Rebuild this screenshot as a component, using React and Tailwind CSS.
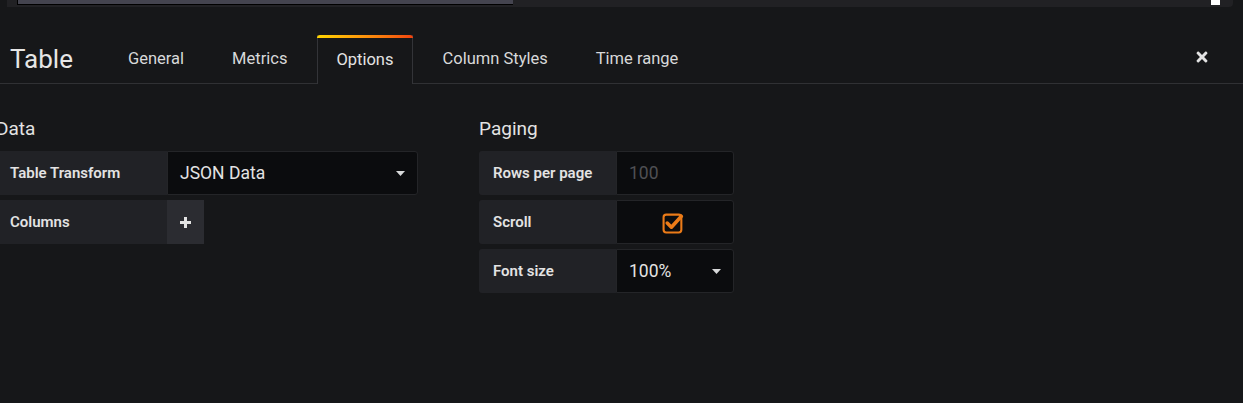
import React from "react";
import { FaTimes } from "react-icons/fa";

const tabs = ["General", "Metrics", "Options", "Column Styles", "Time range"];

const Caret = () => (
  <svg width="9" height="5" viewBox="0 0 9 5" className="shrink-0">
    <path d="M0 0h9L4.5 5z" fill="#d8d9da" />
  </svg>
);

const CheckIcon = () => (
  <svg width="23" height="23" viewBox="0 0 22 22">
    <rect x="1.5" y="3.5" width="17" height="17" rx="2.5" fill="none" stroke="#eb7b18" strokeWidth="2" />
    <path d="M5 11.5l4 4 9.5-10.5" fill="none" stroke="#eb7b18" strokeWidth="3.4" strokeLinecap="round" strokeLinejoin="round" />
  </svg>
);

const Label = ({ children, width }) => (
  <div className={`${width} h-full flex items-center pl-[14px] bg-[#212226] rounded-l-[3px] text-[15px] font-semibold text-[#e3e3e3] shrink-0`}>
    {children}
  </div>
);

const App = () => {
  return (
    <div className="w-[1243px] h-[403px] bg-[#161719] overflow-hidden text-[#d8d9da]" style={{ fontFamily: "Roboto, 'Liberation Sans', sans-serif" }}>
      {/* bottom edge of the panel above */}
      <div className="ml-[7px] w-[1226px] h-[7px] bg-[#212124] rounded-br-[4px] flex">
        <div className="ml-[10px] w-[496px] h-[5px] bg-[#44444f] border-l border-b border-black"></div>
        <div className="ml-auto mr-[13px] w-[9px] h-[5px] bg-white"></div>
      </div>

      {/* tab bar */}
      <div className="mt-[28px] h-[49px] border-b border-[#303134] flex items-stretch">
        <div className="pl-[10px] w-[110px] flex items-center text-[26px] text-[#e6e6e6] leading-none">Table</div>
        <div className="flex gap-[12px]">
          {tabs.map((t) =>
            t === "Options" ? (
              <div key={t} className="relative px-[18px] flex items-center text-[16.5px] text-[#e3e3e3] bg-[#161719] border-x border-[#333438] -mb-px">
                <div className="absolute left-[-1px] right-[-1px] top-0 h-[3px] rounded-t-[3px] bg-gradient-to-r from-[#ffd500] to-[#f0420f]"></div>
                <span className="pt-[1px]">{t}</span>
              </div>
            ) : (
              <div key={t} className="px-[18px] flex items-center text-[16.5px] text-[#d8d9da]">
                <span className="pt-[1px]">{t}</span>
              </div>
            )
          )}
        </div>
        <div className="ml-auto mr-[33px] flex items-center pb-[4px]">
          <FaTimes className="text-[#e3e3e3] w-[16px] h-[16px]" />
        </div>
      </div>

      {/* options body */}
      <div className="flex -ml-[4px] pt-[33px]">
        <div className="w-[483px]">
          <div className="h-[24px] text-[19px] leading-[24px] text-[#e3e3e3] mb-[10px]">Data</div>
          <div className="flex flex-col gap-[5px]">
            <div className="flex h-[44px]">
              <Label width="w-[171px]">Table Transform</Label>
              <div className="w-[251px] h-full bg-[#0b0c0e] border border-[#242528] rounded-r-[3px] flex items-center justify-between pl-[12px] pr-[12px] text-[17.5px] text-[#e3e3e3]">
                <span>JSON Data</span>
                <Caret />
              </div>
            </div>
            <div className="flex h-[44px]">
              <Label width="w-[171px]">Columns</Label>
              <div className="w-[37px] h-full bg-[#2b2c31] flex items-center justify-center">
                <svg width="11" height="11" viewBox="0 0 11 11">
                  <path d="M5.5 0v11M0 5.5h11" stroke="#e3e3e3" strokeWidth="3" />
                </svg>
              </div>
            </div>
          </div>
        </div>

        <div className="w-[255px]">
          <div className="h-[24px] text-[19px] leading-[24px] text-[#e3e3e3] mb-[10px]">Paging</div>
          <div className="flex flex-col gap-[5px]">
            <div className="flex h-[44px]">
              <Label width="w-[137px]">Rows per page</Label>
              <div className="w-[118px] h-full bg-[#0b0c0e] border border-[#242528] rounded-r-[3px] flex items-center pl-[12px] text-[17.5px] text-[#4f5054]">
                100
              </div>
            </div>
            <div className="flex h-[44px]">
              <Label width="w-[137px]">Scroll</Label>
              <div className="w-[118px] h-full bg-[#0b0c0e] border border-[#242528] rounded-r-[3px] flex items-center justify-center pr-[4px]">
                <CheckIcon />
              </div>
            </div>
            <div className="flex h-[44px]">
              <Label width="w-[137px]">Font size</Label>
              <div className="w-[118px] h-full bg-[#0b0c0e] border border-[#242528] rounded-r-[3px] flex items-center justify-between pl-[12px] pr-[12px] text-[17.5px] text-[#e3e3e3]">
                <span>100%</span>
                <Caret />
              </div>
            </div>
          </div>
        </div>
      </div>
    </div>
  );
};

export default App;
